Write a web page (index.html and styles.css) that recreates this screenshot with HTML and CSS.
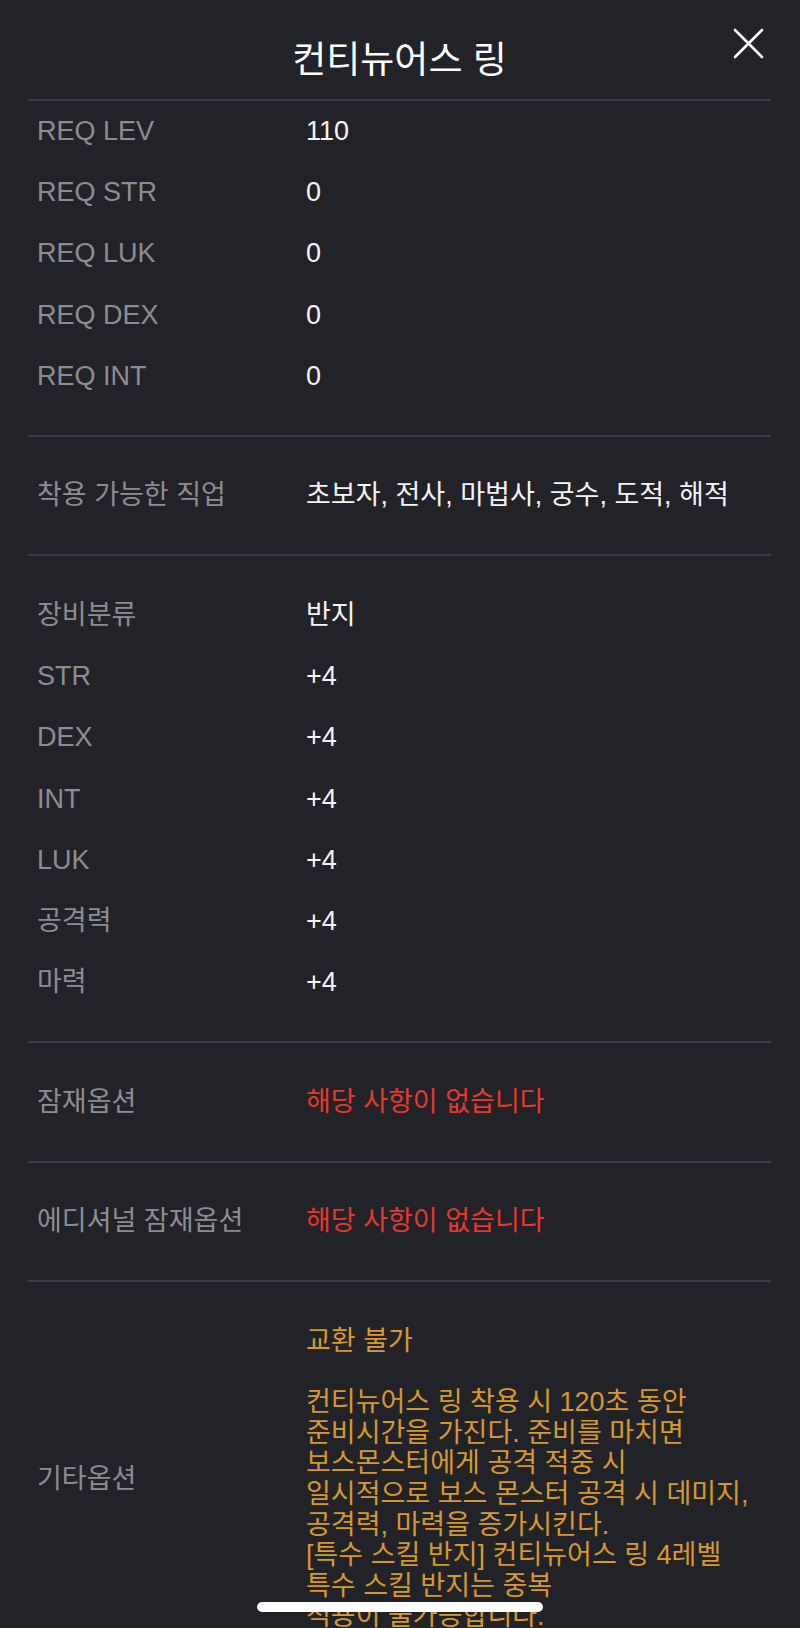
FILE: index.html
```html
<!DOCTYPE html>
<html lang="ko">
<head>
<meta charset="utf-8">
<title>컨티뉴어스 링</title>
<link rel="stylesheet" href="styles.css">
</head>
<body>
<div class="sheet">
  <header class="head">
    <span class="spacer"></span>
    <h1 class="title">컨티뉴어스 링</h1>
    <button class="close" aria-label="닫기">
      <svg width="31" height="31" viewBox="0 0 31 31"><path d="M2 2 L29 29 M29 2 L2 29" stroke="#ffffff" stroke-width="2.6" stroke-linecap="round" fill="none"/></svg>
    </button>
  </header>

  <section class="group first">
    <div class="row"><span class="label">REQ LEV</span><span class="value">110</span></div>
    <div class="row"><span class="label">REQ STR</span><span class="value">0</span></div>
    <div class="row"><span class="label">REQ LUK</span><span class="value">0</span></div>
    <div class="row"><span class="label">REQ DEX</span><span class="value">0</span></div>
    <div class="row"><span class="label">REQ INT</span><span class="value">0</span></div>
  </section>

  <section class="group">
    <div class="row"><span class="label">착용 가능한 직업</span><span class="value">초보자, 전사, 마법사, 궁수, 도적, 해적</span></div>
  </section>

  <section class="group">
    <div class="row"><span class="label">장비분류</span><span class="value">반지</span></div>
    <div class="row"><span class="label">STR</span><span class="value">+4</span></div>
    <div class="row"><span class="label">DEX</span><span class="value">+4</span></div>
    <div class="row"><span class="label">INT</span><span class="value">+4</span></div>
    <div class="row"><span class="label">LUK</span><span class="value">+4</span></div>
    <div class="row"><span class="label">공격력</span><span class="value">+4</span></div>
    <div class="row"><span class="label">마력</span><span class="value">+4</span></div>
  </section>

  <section class="group">
    <div class="row"><span class="label">잠재옵션</span><span class="value red">해당 사항이 없습니다</span></div>
  </section>

  <section class="group">
    <div class="row"><span class="label">에디셔널 잠재옵션</span><span class="value red">해당 사항이 없습니다</span></div>
  </section>

  <section class="group last">
    <div class="row">
      <span class="label">기타옵션</span>
      <div class="value orange">
        <p class="para">교환 불가</p>
        <p class="para gap">
          <span class="ln">컨티뉴어스 링 착용 시 120초 동안</span>
          <span class="ln">준비시간을 가진다. 준비를 마치면</span>
          <span class="ln">보스몬스터에게 공격 적중 시</span>
          <span class="ln">일시적으로 보스 몬스터 공격 시 데미지,</span>
          <span class="ln">공격력, 마력을 증가시킨다.</span>
          <span class="ln">[특수 스킬 반지] 컨티뉴어스 링 4레벨</span>
          <span class="ln">특수 스킬 반지는 중복</span>
          <span class="ln">적용이 불가능합니다.</span>
        </p>
      </div>
    </div>
  </section>
</div>
<div class="home-indicator"></div>
</body>
</html>
```

FILE: styles.css
```css
html, body {
  margin: 0;
  padding: 0;
  background: #222328;
}

body {
  font-family: "Liberation Sans", "Noto Sans CJK KR", sans-serif;
  color: #f4f4f4;
  font-size: 27px;
}

.sheet {
  margin: 0 29px 0 28px;
}

.head {
  height: 98.5px;
  border-bottom: 2px solid #3b3c44;
  display: grid;
  grid-template-columns: 1fr auto 1fr;
  align-items: start;
}

.title {
  margin: 41px 0 0 0;
  font-size: 37px;
  line-height: 40px;
  font-weight: normal;
  color: #ffffff;
  white-space: nowrap;
}

.close {
  justify-self: end;
  margin: 28px 7px 0 0;
  padding: 0;
  border: 0;
  background: none;
  width: 31px;
  height: 31px;
  display: block;
}

.close svg {
  display: block;
}

.group {
  padding: 28.25px 0 28px 0;
  border-bottom: 2px solid #3b3c44;
}

.group.first {
  padding-top: 0;
}

.group.last {
  border-bottom: 0;
}

.row {
  display: grid;
  grid-template-columns: 269px 1fr;
  align-items: center;
  padding: 15.3125px 0 15.3125px 9px;
  line-height: 30.625px;
}

.label {
  color: #8c8d93;
  white-space: nowrap;
}

.value {
  color: #f4f4f4;
  white-space: nowrap;
}

.red {
  color: #e5392f;
}

.orange {
  color: #d6982f;
}

.para {
  margin: 0;
}

.para.gap {
  margin-top: 30.625px;
}

.ln {
  display: block;
}

.home-indicator {
  position: fixed;
  left: 257px;
  bottom: 16px;
  width: 286px;
  height: 10px;
  border-radius: 5px;
  background: #ffffff;
}
```
